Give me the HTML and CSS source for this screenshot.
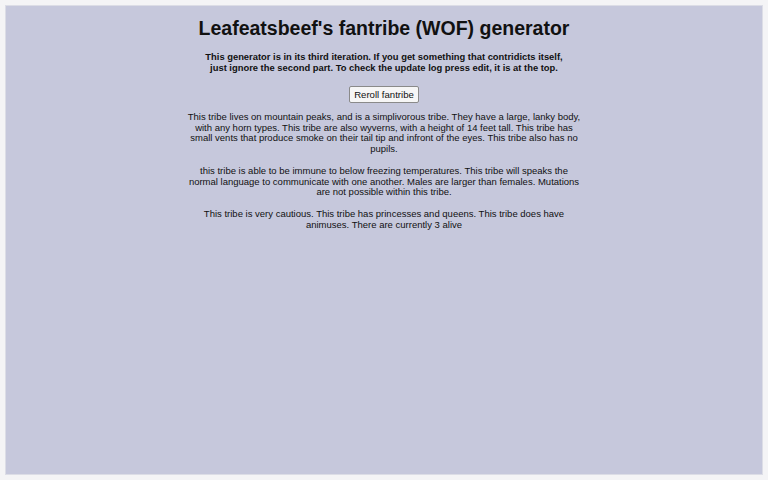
FILE: index.html
```html
<!DOCTYPE html>
<html lang="en">
<head>
    <meta charset="UTF-8">
    <meta name="viewport" content="width=device-width, initial-scale=1.0">
    <title>Leafeatsbeef's fantribe (WOF) generator</title>
    <link rel="stylesheet" href="styles.css">
</head>
<body>
    <div class="page">
        <h1>Leafeatsbeef's fantribe (WOF) generator</h1>

        <p class="notice">This generator is in its third iteration. If you get something that contridicts itself, just ignore the second part. To check the update log press edit, it is at the top.</p>

        <button type="button" id="reroll">Reroll fantribe</button>

        <div class="tribe" id="tribe">
            <p>This tribe lives on mountain peaks, and is a simplivorous tribe. They have a large, lanky body, with any horn types. This tribe are also wyverns, with a height of 14 feet tall. This tribe has small vents that produce smoke on their tail tip and infront of the eyes. This tribe also has no pupils.</p>
            <p>this tribe is able to be immune to below freezing temperatures. This tribe will speaks the normal language to communicate with one another. Males are larger than females. Mutations are not possible within this tribe.</p>
            <p>This tribe is very cautious. This tribe has princesses and queens. This tribe does have animuses. There are currently 3 alive</p>
        </div>
    </div>
</body>
</html>
```

FILE: styles.css
```css
html, body {
    height: 100%;
}

body {
    margin: 0;
    padding: 5px;
    box-sizing: border-box;
    background: #f4f4f6;
    font-family: "Liberation Sans", Arial, sans-serif;
    color: #111;
}

.page {
    height: 100%;
    background: #c6c8dc;
    border: 1px solid #dcdde6;
    box-sizing: border-box;
    display: flex;
    flex-direction: column;
    align-items: center;
    text-align: center;
}

h1 {
    font-size: 19.5px;
    line-height: 22px;
    margin: 11px 0 0;
}

.notice {
    width: 372px;
    font-size: 9.4px;
    font-weight: bold;
    line-height: 11px;
    margin: 12px 0 0;
}

#reroll {
    font-family: inherit;
    font-size: 9.6px;
    margin-top: 13px;
    padding: 0 4px;
    color: #111;
    background: #f6f6f6;
    border: 1px solid #8a8a8a;
    border-radius: 2px;
    height: 17px;
}

.tribe {
    width: 396px;
    font-size: 9.5px;
    line-height: 10.7px;
    margin-top: 9px;
}

.tribe p {
    margin: 0 0 11px;
}
```
